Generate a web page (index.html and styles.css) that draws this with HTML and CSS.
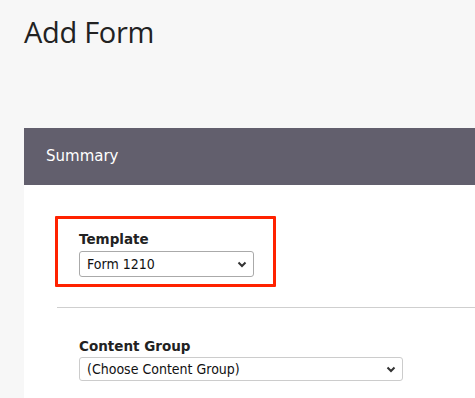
FILE: index.html
```html
<!DOCTYPE html>
<html>
<head>
<meta charset="utf-8">
<link rel="stylesheet" href="styles.css">
</head>
<body>
<div class="page">
  <h1 class="title">Add Form</h1>
  <div class="card">
    <div class="card-header">Summary</div>
    <div class="card-body">
      <div class="highlight">
        <div class="field">
          <div class="label">Template</div>
          <div class="select select-short">
            <span class="select-text">Form 1210</span>
            <svg class="chev" width="10" height="7" viewBox="0 0 10 7"><path d="M1.5 1.5 L5 5 L8.5 1.5" fill="none" stroke="#333" stroke-width="2"/></svg>
          </div>
        </div>
      </div>
      <div class="divider"></div>
      <div class="field field-plain">
        <div class="label">Content Group</div>
        <div class="select select-long">
          <span class="select-text">(Choose Content Group)</span>
          <svg class="chev" width="10" height="7" viewBox="0 0 10 7"><path d="M1.5 1.5 L5 5 L8.5 1.5" fill="none" stroke="#333" stroke-width="2"/></svg>
        </div>
      </div>
    </div>
  </div>
</div>
</body>
</html>
```
FILE: styles.css
```css
html, body {
  margin: 0;
  padding: 0;
  background: #f7f7f7;
  font-family: "DejaVu Sans", Verdana, sans-serif;
}
.page {
  padding-left: 24px;
  height: 398px;
  overflow: hidden;
}
.title {
  margin: 0;
  padding-top: 13px;
  height: 128px;
  box-sizing: border-box;
  font-family: "Open Sans", sans-serif;
  font-weight: 400;
  font-size: 29px;
  line-height: 38px;
  color: #222;
  letter-spacing: -0.3px;
}
.card {
  background: #fff;
  height: 300px;
}
.card-header {
  background: #625f6d;
  color: #fff;
  height: 57px;
  line-height: 57px;
  padding-left: 22px;
  font-size: 15px;
}
.card-body {
  padding-top: 31px;
}
.highlight {
  margin-left: 31px;
  width: 221px;
  height: 71px;
  box-sizing: border-box;
  border: 3px solid #ff2200;
  border-radius: 1px;
  padding: 12px 0 0 21px;
}
.label {
  font-weight: bold;
  font-size: 13.5px;
  line-height: 16px;
  color: #222;
  margin-bottom: 4px;
}
.select {
  display: flex;
  align-items: center;
  justify-content: space-between;
  height: 26px;
  box-sizing: border-box;
  border: 1px solid #aaa;
  border-radius: 3px;
  padding: 0 6px 0 7px;
  background: #fff;
  font-family: "DejaVu Sans Condensed", "DejaVu Sans", sans-serif;
  font-stretch: semi-condensed;
  font-size: 14px;
  color: #111;
}
.select-short { width: 175px; }
.select-long { width: 324px; height: 24px; border-color: #ccc; margin-top: -1px; }
.chev { display: block; }
.divider {
  margin: 20px 0 0 33px;
  height: 1px;
  background: #cfcfcf;
}
.field-plain {
  margin: 30px 0 0 55px;
}
```
